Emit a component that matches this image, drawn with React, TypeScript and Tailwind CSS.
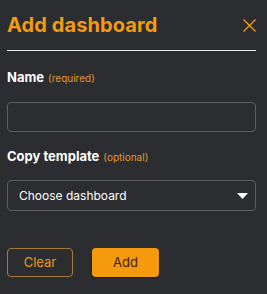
export default function App() {
  return (
    <div
      className="w-[267px] h-[294px] bg-[#2b2d30] pl-[7px] pr-[11px] pt-[12px]"
      style={{ fontFamily: 'Inter, "Noto Sans", sans-serif' }}
    >
      <div className="flex items-center justify-between h-[26px]">
        <h1 className="text-[20px] leading-none font-bold text-[#f39c12] tracking-[0.1px]">Add dashboard</h1>
        <svg width="13" height="13" viewBox="0 0 13 13" className="text-[#f39c12] mr-[0px] mt-[1px]">
          <path d="M0.5 0.5 L12.5 12.5 M12.5 0.5 L0.5 12.5" stroke="currentColor" strokeWidth="1.3" />
        </svg>
      </div>
      <div className="mt-[12px] h-[1px] bg-[#e6e6e6]" />

      <div className="mt-[17px] flex items-baseline gap-[4px]">
        <span className="text-[13px] font-bold text-white">Name</span>
        <span className="text-[10px] text-[#e09a2a]">(required)</span>
      </div>
      <input
        className="mt-[14px] block w-full h-[30px] rounded-[4px] border border-[#5c5f63] bg-[#2b2d30] text-white text-[13px] px-[11px] outline-none"
      />

      <div className="mt-[15px] flex items-baseline gap-[4px]">
        <span className="text-[13px] font-bold text-white">Copy template</span>
        <span className="text-[10px] text-[#e09a2a]">(optional)</span>
      </div>
      <div className="mt-[14px] h-[31px] rounded-[4px] border border-[#5c5f63] flex items-center justify-between pl-[11px] pr-[7px]">
        <span className="text-[12px] text-white">Choose dashboard</span>
        <svg width="11" height="6" viewBox="0 0 11 6" className="text-white">
          <path d="M0 0 L11 0 L5.5 6 Z" fill="currentColor" />
        </svg>
      </div>

      <div className="mt-[37px] flex gap-[19px]">
        <button className="w-[66px] h-[29px] rounded-[4px] border border-[#a57c3c] text-[#e39a22] text-[13px]">
          Clear
        </button>
        <button className="w-[67px] h-[29px] rounded-[4px] bg-[#f59a0c] text-[#3a2406] text-[13px] shadow-[0_1px_2px_rgba(0,0,0,0.4)]">
          Add
        </button>
      </div>
    </div>
  );
}
